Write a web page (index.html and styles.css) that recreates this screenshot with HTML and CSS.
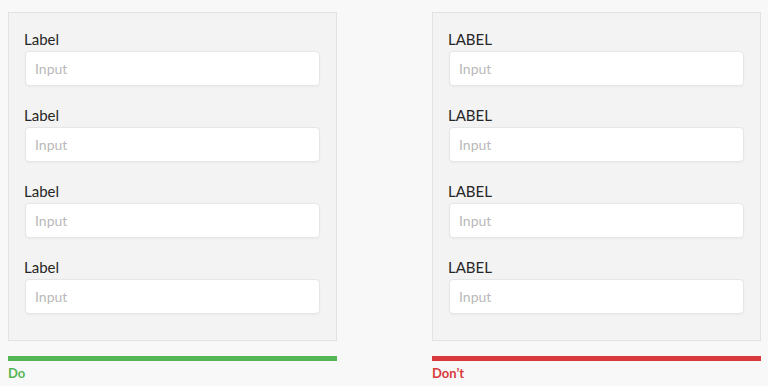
FILE: index.html
```html
<!DOCTYPE html>
<html lang="en">
<head>
  <meta charset="UTF-8" />
  <meta name="viewport" content="width=device-width, initial-scale=1.0" />
  <title>Labels: Do / Don't</title>
  <link rel="stylesheet" href="styles.css">
</head>
<body>
  <main class="compare">
    <!-- Do -->
    <section class="example">
      <form class="panel">
        <div class="field">
          <label>Label</label>
          <input type="text" placeholder="Input">
        </div>
        <div class="field">
          <label>Label</label>
          <input type="text" placeholder="Input">
        </div>
        <div class="field">
          <label>Label</label>
          <input type="text" placeholder="Input">
        </div>
        <div class="field">
          <label>Label</label>
          <input type="text" placeholder="Input">
        </div>
      </form>
      <div class="bar bar-do"></div>
      <p class="caption caption-do">Do</p>
    </section>

    <!-- Don't -->
    <section class="example">
      <form class="panel">
        <div class="field">
          <label>LABEL</label>
          <input type="text" placeholder="Input">
        </div>
        <div class="field">
          <label>LABEL</label>
          <input type="text" placeholder="Input">
        </div>
        <div class="field">
          <label>LABEL</label>
          <input type="text" placeholder="Input">
        </div>
        <div class="field">
          <label>LABEL</label>
          <input type="text" placeholder="Input">
        </div>
      </form>
      <div class="bar bar-dont"></div>
      <p class="caption caption-dont">Don’t</p>
    </section>
  </main>
</body>
</html>
```

FILE: styles.css
```css
:root {
  --page-bg: #f8f8f8;
  --panel-bg: #f3f3f3;
  --panel-border: #e2e2e2;
  --input-border: #e6e6e6;
  --label-color: #262626;
  --placeholder: #b9b9b9;
  --do-color: #55b655;
  --dont-color: #d83a3c;
}

* {
  box-sizing: border-box;
  margin: 0;
  padding: 0;
}

body {
  font-family: Lato, 'Open Sans', sans-serif;
  background-color: var(--page-bg);
  color: var(--label-color);
}

.compare {
  display: flex;
  gap: 95px;
  padding: 12px 0 0 8px;
}

.example {
  width: 329px;
}

.panel {
  background-color: var(--panel-bg);
  border: 1px solid var(--panel-border);
  padding: 16px 16px 26px 15px;
  display: flex;
  flex-direction: column;
  gap: 19px;
}

.field {
  display: flex;
  flex-direction: column;
  gap: 2px;
}

.field label {
  font-size: 15px;
  line-height: 20px;
  color: var(--label-color);
}

.field input {
  height: 35px;
  width: calc(100% - 1px);
  margin-left: 1px;
  background-color: #fff;
  border: 1px solid var(--input-border);
  border-radius: 4px;
  box-shadow: 0 1px 2px rgba(0, 0, 0, 0.04);
  padding: 0 9px;
  font-family: inherit;
  font-size: 14px;
  color: var(--label-color);
  outline: none;
}

.field input::placeholder {
  color: var(--placeholder);
}

.bar {
  height: 5px;
  margin-top: 15px;
}

.bar-do {
  background-color: var(--do-color);
}

.bar-dont {
  background-color: var(--dont-color);
}

.caption {
  margin-top: 4px;
  font-size: 13px;
  line-height: 16px;
  font-weight: bold;
}

.caption-do {
  color: var(--do-color);
}

.caption-dont {
  color: var(--dont-color);
}
```
